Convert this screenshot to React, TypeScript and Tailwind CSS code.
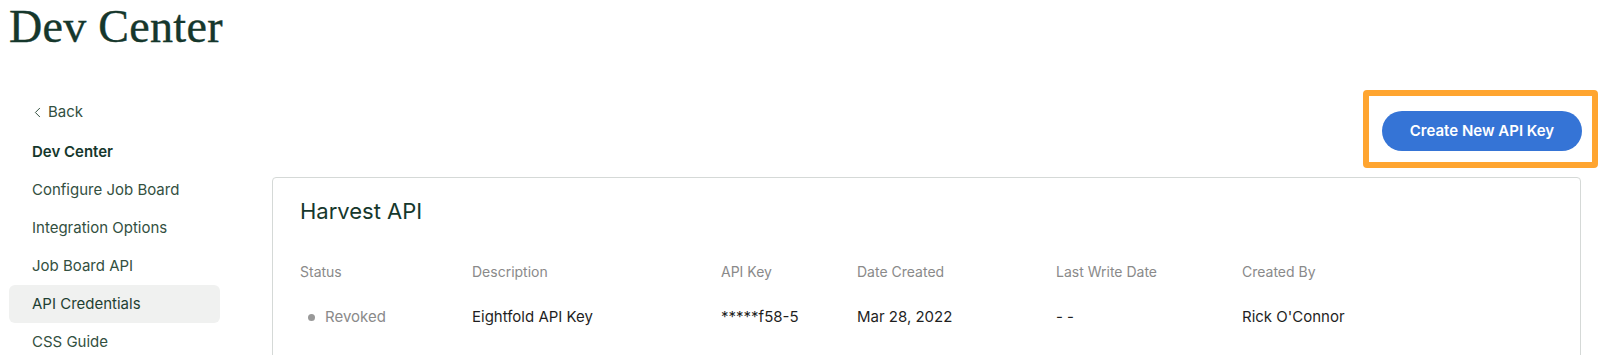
import { ChevronLeft } from 'lucide-react';

const NAV = ['Configure Job Board', 'Integration Options', 'Job Board API', 'API Credentials', 'CSS Guide'];

const COLUMNS = ['Status', 'Description', 'API Key', 'Date Created', 'Last Write Date', 'Created By'];

export default function App() {
  return (
    <div className="h-[355px] bg-white pl-[9px] pr-[30px] font-['Inter',sans-serif] overflow-hidden">
      {/* Page title */}
      <h1 className="mt-[2px] text-[46px] leading-[50px] text-[#15372c] font-['Liberation_Serif',serif] tracking-[0.3px] [-webkit-text-stroke:0.4px_#15372c]">
        Dev Center
      </h1>

      <div className="mt-[41px] flex">
        {/* Sidebar */}
        <nav className="w-[211px] flex-shrink-0">
          <div className="h-[38px] mb-[2px] flex items-center pl-[20px] gap-[2px] text-[15px] text-[#33503f]">
            <ChevronLeft className="w-[17px] h-[17px]" strokeWidth={1.4} />
            <span>Back</span>
          </div>
          <div className="h-[38px] flex items-center pl-[23px] text-[15px] font-semibold text-[#15372c]">
            Dev Center
          </div>
          {NAV.map((item) => (
            <div
              key={item}
              className={
                item === 'API Credentials'
                  ? 'h-[38px] flex items-center pl-[23px] text-[15px] text-[#1f3f33] bg-[#f0f1f0] rounded-[6px]'
                  : 'h-[38px] flex items-center pl-[23px] text-[15px] text-[#33503f]'
              }
            >
              {item}
            </div>
          ))}
        </nav>

        {/* Main */}
        <main className="ml-[52px] flex-1 min-w-0">
          <div className="mt-[18px] flex justify-end">
            <div className="relative mr-[-1px]">
              <button className="h-[40px] w-[200px] rounded-full bg-[#3574d6] text-white text-[15px] font-semibold">
                Create New API Key
              </button>
              <span className="absolute -left-[19px] -top-[21px] -right-[16px] -bottom-[17px] border-[6px] border-[#ffa530] rounded-[4px] pointer-events-none" />
            </div>
          </div>

          <div className="mt-[26px] h-[200px] border border-[#d5d9d7] rounded-[4px] pt-[19px] px-[27px]">
            <h2 className="text-[22px] leading-[28px] text-[#15372c]">Harvest API</h2>

            <div className="mt-[37px] grid grid-cols-[172px_249px_136px_199px_186px_1fr] text-[14px] leading-[20px] text-[#8a8a8a]">
              {COLUMNS.map((c) => (
                <div key={c}>{c}</div>
              ))}
            </div>

            <div className="mt-[24px] grid grid-cols-[172px_249px_136px_199px_186px_1fr] text-[15px] leading-[22px] text-[#1f1f1f]">
              <div className="flex items-center gap-[10px] pl-[8px] text-[#8a8a8a]">
                <span className="w-[7px] h-[7px] rounded-full bg-[#999]" />
                Revoked
              </div>
              <div>Eightfold API Key</div>
              <div>*****f58-5</div>
              <div>Mar 28, 2022</div>
              <div>- -</div>
              <div>Rick O'Connor</div>
            </div>
          </div>
        </main>
      </div>
    </div>
  );
}
